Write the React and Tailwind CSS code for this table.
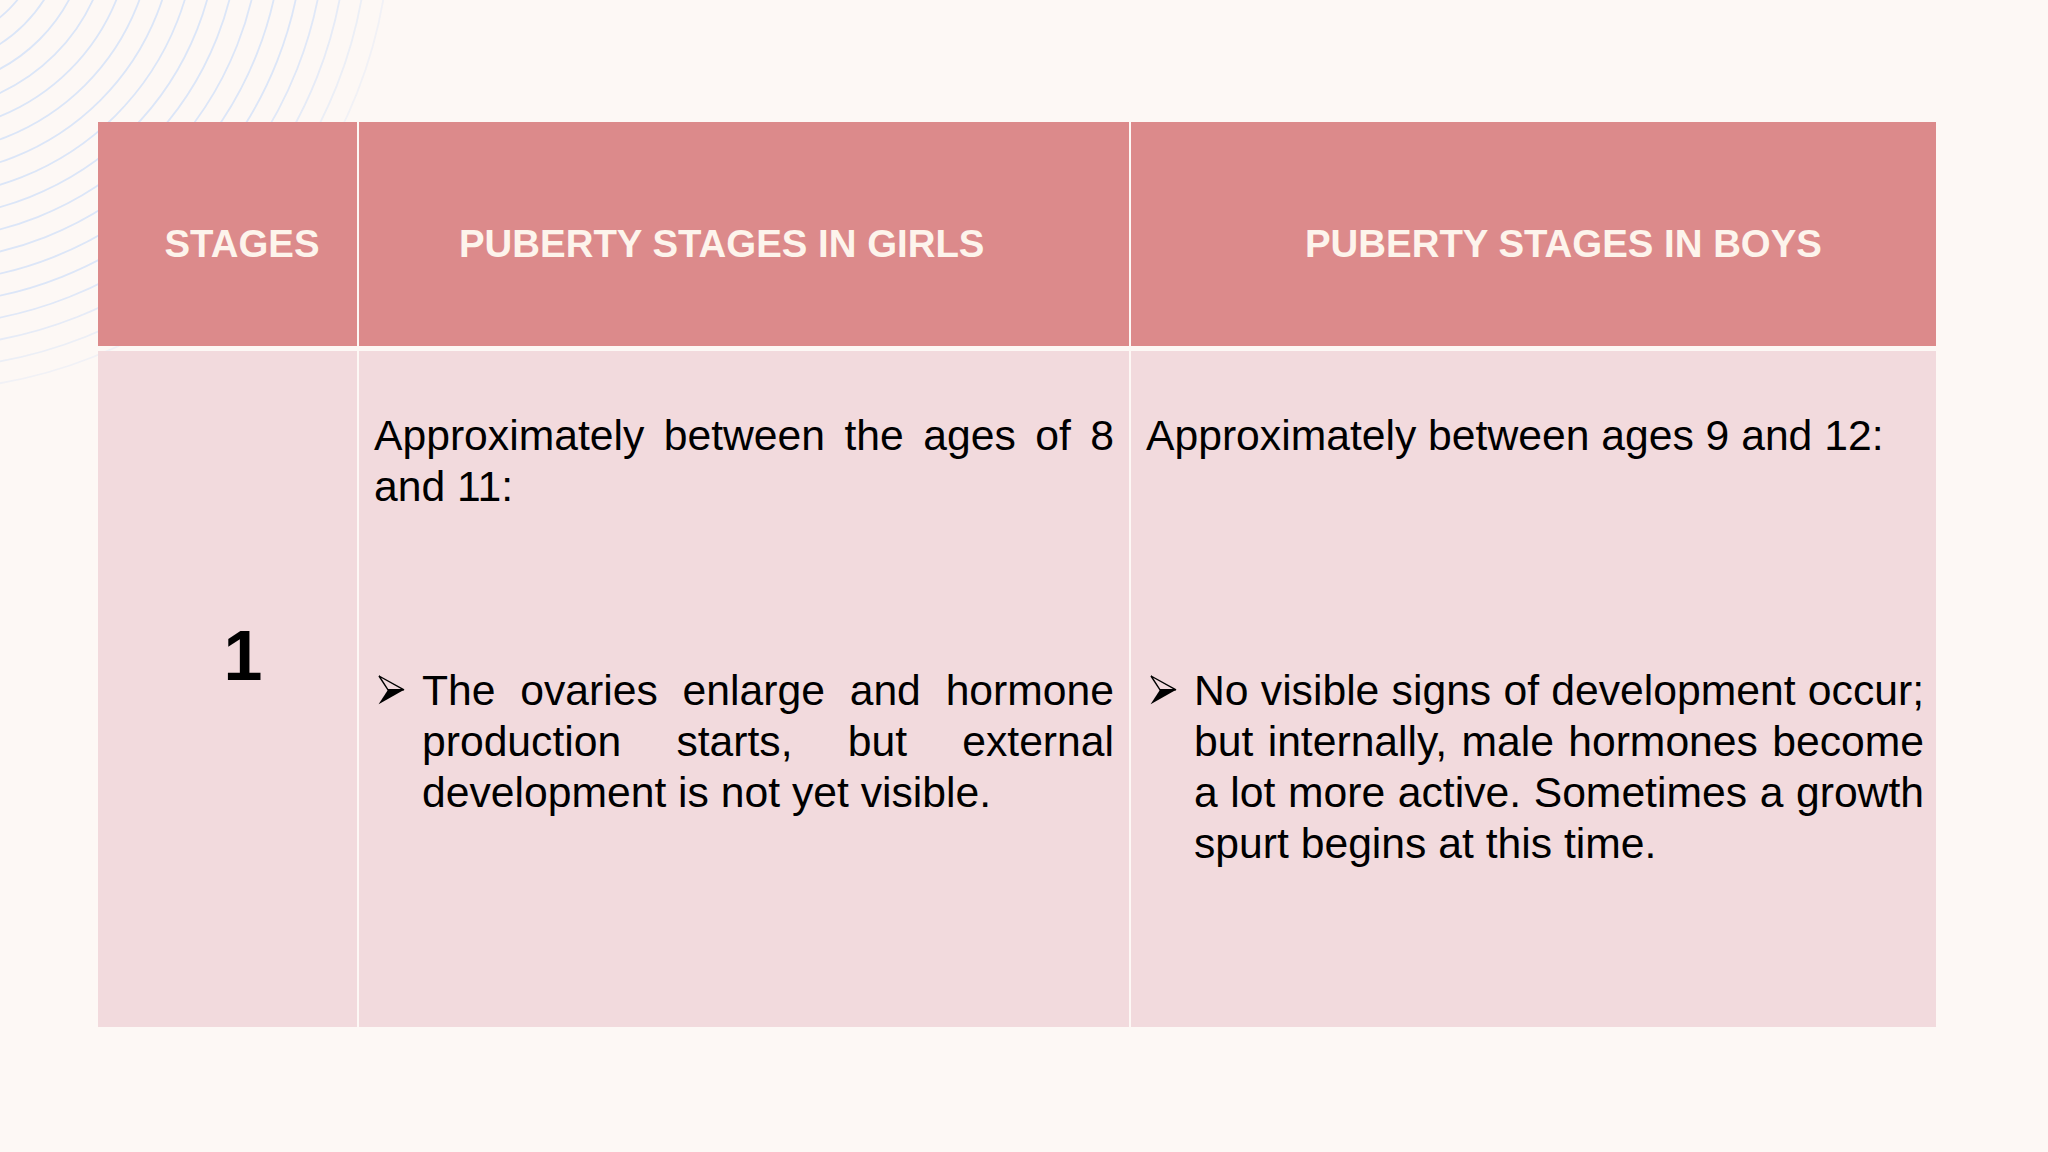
import React from "react";

function Arrow() {
  return (
    <svg width="27" height="30" viewBox="0 0 27 30" className="block">
      <path d="M1 1 L26 14.8 L10 14.8 Z" fill="none" stroke="#000" strokeWidth="1.4" strokeLinejoin="miter" />
      <path d="M10 14.8 L26.2 14.8 L0.6 29.2 Z" fill="#000" />
    </svg>
  );
}

function Arcs() {
  const radii = [];
  for (let r = 126; r <= 470; r += 21.5) radii.push(r);
  return (
    <svg
      width="480"
      height="420"
      viewBox="0 0 480 420"
      className="absolute left-0 top-0 pointer-events-none"
    >
      <defs>
        <radialGradient id="fade" cx="-80" cy="-80" r="560" gradientUnits="userSpaceOnUse">
          <stop offset="0" stopColor="#fff" stopOpacity="1" />
          <stop offset="0.7" stopColor="#fff" stopOpacity="0.95" />
          <stop offset="0.86" stopColor="#fff" stopOpacity="0.25" />
          <stop offset="1" stopColor="#fff" stopOpacity="0" />
        </radialGradient>
        <mask id="m">
          <rect x="0" y="0" width="480" height="420" fill="url(#fade)" />
        </mask>
      </defs>
      <g mask="url(#m)" fill="none" stroke="#dae5f8" strokeWidth="1.8">
        {radii.map((r, i) => (
          <circle key={i} cx="-80" cy="-80" r={r} />
        ))}
      </g>
    </svg>
  );
}

export default function App() {
  return (
    <div
      className="relative h-[1152px] w-[2048px] overflow-hidden bg-[#fdf8f5]"
      style={{ fontFamily: '"Liberation Sans", Arial, sans-serif' }}
    >
      <Arcs />
      <div className="relative pl-[98px] pt-[122px]">
        <div className="grid w-[1838px] grid-cols-[259px_770px_805px] grid-rows-[224px_676px] gap-x-[2px] gap-y-[5px]">
          {/* Header row */}
          <div className="bg-[#dc8a8b] pl-[29px] pt-[103px] text-center text-[38.4px] font-bold leading-[38.4px] text-[#fdf4ec]">
            STAGES
          </div>
          <div className="bg-[#dc8a8b] pl-[100px] pt-[103px] text-[38.4px] font-bold leading-[38.4px] text-[#fdf4ec]">
            PUBERTY STAGES IN GIRLS
          </div>
          <div className="bg-[#dc8a8b] pl-[174px] pt-[103px] text-[38.4px] font-bold leading-[38.4px] text-[#fdf4ec]">
            PUBERTY STAGES IN BOYS
          </div>

          {/* Body row */}
          <div className="bg-[#f2dadd] pl-[31px] pt-[270px] text-center text-[70px] font-bold leading-[70px] text-black">
            1
          </div>
          <div className="bg-[#f2dadd] pl-[15px] pr-[15px] pt-[59px] text-[42.67px] leading-[51px] text-black">
            <p className="text-justify">Approximately between the ages of 8 and 11:</p>
            <div className="mt-[153px] flex">
              <div className="w-[48px] shrink-0 pl-[4px] pt-[10px]">
                <Arrow />
              </div>
              <p className="flex-1 text-justify">
                The ovaries enlarge and hormone production starts, but external development is not yet visible.
              </p>
            </div>
          </div>
          <div className="bg-[#f2dadd] pl-[15px] pr-[12px] pt-[59px] text-[42.67px] leading-[51px] text-black">
            <p className="text-justify">Approximately between ages 9 and 12:</p>
            <div className="mt-[204px] flex">
              <div className="w-[48px] shrink-0 pl-[4px] pt-[10px]">
                <Arrow />
              </div>
              <p className="flex-1 text-justify">
                No visible signs of development occur; but internally, male hormones become a lot more active. Sometimes a growth spurt begins at this time.
              </p>
            </div>
          </div>
        </div>
      </div>
    </div>
  );
}
